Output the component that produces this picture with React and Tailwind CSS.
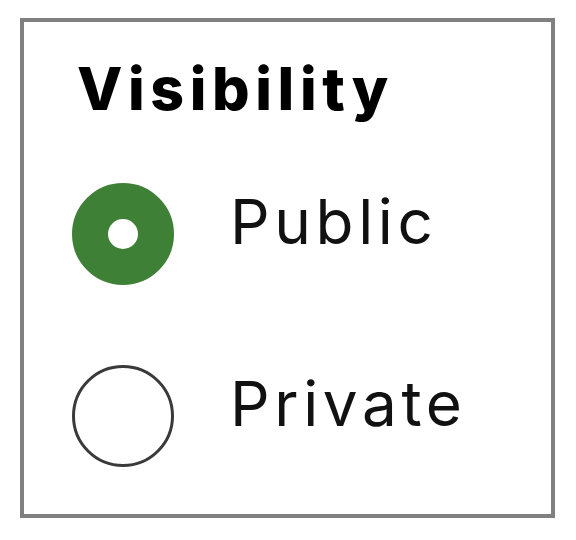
import React, { useState } from 'react';

const options = ['Public', 'Private'];

function Radio({ checked }) {
  return checked ? (
    <span className="block w-[102px] h-[102px] rounded-full border-[36px] border-[#3e8035] bg-white shrink-0" />
  ) : (
    <span className="block w-[102px] h-[102px] rounded-full border-[3px] border-[#3a3a3a] bg-white shrink-0" />
  );
}

export default function App() {
  const [value, setValue] = useState('Public');

  return (
    <div className="w-[576px] h-[540px] bg-white pt-[18px] pl-[20px]" style={{ fontFamily: 'Inter, "Liberation Sans", sans-serif' }}>
      <div className="w-[535px] h-[500px] border-4 border-[#808080] pl-[48px] pt-[32px]">
        <h1 className="text-[59px] leading-[70px] font-extrabold text-black tracking-[0.095em] pl-[5px]">
          Visibility
        </h1>
        <div className="flex flex-col gap-[80px] mt-[59px]">
          {options.map((opt) => (
            <label key={opt} className="flex items-start gap-[56px] cursor-pointer" onClick={() => setValue(opt)}>
              <Radio checked={value === opt} />
              <span className="mt-[4px] text-[62px] leading-[70px] text-[#111] tracking-[0.075em]">{opt}</span>
            </label>
          ))}
        </div>
      </div>
    </div>
  );
}
